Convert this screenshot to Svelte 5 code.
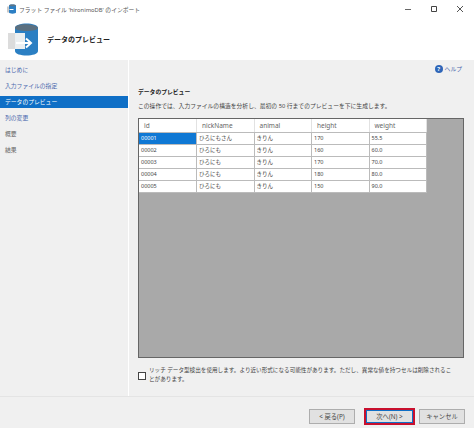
<script>
  const steps = [
    { label: 'はじめに', state: 'link' },
    { label: '入力ファイルの指定', state: 'link' },
    { label: 'データのプレビュー', state: 'active' },
    { label: '列の変更', state: 'link' },
    { label: '概要', state: '' },
    { label: '結果', state: '' }
  ];
  const columns = ['id', 'nickName', 'animal', 'height', 'weight'];
  const rows = [
    ['00001', 'ひろにもさん', 'きりん', '170', '55.5'],
    ['00002', 'ひろにも', 'きりん', '160', '60.0'],
    ['00003', 'ひろにも', 'きりん', '170', '70.0'],
    ['00004', 'ひろにも', 'きりん', '180', '80.0'],
    ['00005', 'ひろにも', 'きりん', '150', '90.0']
  ];
</script>

<div class="window">
  <div class="titlebar">
    <svg class="app-icon" viewBox="0 0 9 10" width="9" height="10">
      <path d="M0 2.500h5v6H0z" fill="#c9c9c9" />
      <path d="M2 1.500c0-1.500 7-1.500 7 0v7c0 1.500-7 1.500-7 0z" fill="#2c7fc4" />
      <path d="M2 1.500c0 1 7 1 7 0s-7-1.500-7 0z" fill="#5d7486" />
      <path d="M2.500 5.500h4" stroke="#fff" />
    </svg>
    <span class="title">フラット ファイル 'hironimoDB' のインポート</span>
    <div class="controls">
      <svg viewBox="0 0 6 6" width="6" height="6"><path d="M0 3.500h6" stroke="#666" /></svg>
      <svg viewBox="0 0 6 6" width="6" height="6"><path d="M.5.500h5v5h-5z" stroke="#444" fill="none" /></svg>
      <svg viewBox="0 0 6 6" width="6" height="6"><path d="M0 0l6 6M6 0l-6 6" stroke="#555" /></svg>
    </div>
  </div>

  <header class="head">
    <svg class="logo" viewBox="0 0 32 33" width="32" height="33">
      <path d="M8 5c0-6 23-6 23 0v23c0 6-23 6-23 0z" fill="#2b7fc3" />
      <path d="M8 5c0 4 23 4 23 0S8-1 8 5z" fill="#5b7080" />
      <path d="M1 10h17v16H1z" fill="#dcdcdc" />
      <path d="M8 10h10v16H8z" fill="#eceff1" />
      <path d="M9 20h14M19 15.500l5 4.500-5 4.500" stroke="#fff" stroke-width="2" fill="none" />
    </svg>
    <h1>データのプレビュー</h1>
  </header>

  <div class="body">
    <nav class="steps">
      {#each steps as step}
        <div class="step {step.state}">{step.label}</div>
      {/each}
    </nav>

    <main class="content">
      <div class="help">
        <span class="help-icon">?</span>
        <span>ヘルプ</span>
      </div>
      <h2>データのプレビュー</h2>
      <p class="intro">この操作では、入力ファイルの構造を分析し、最初の 50 行までのプレビューを下に生成します。</p>

      <div class="grid">
        <table>
          <thead>
            <tr>
              {#each columns as col}
                <th>{col}</th>
              {/each}
            </tr>
          </thead>
          <tbody>
            {#each rows as row, r}
              <tr>
                {#each row as cell, c}
                  <td class:selected={r === 0 && c === 0}>{cell}</td>
                {/each}
              </tr>
            {/each}
          </tbody>
        </table>
      </div>

      <label class="rich">
        <span class="check"></span>
        <span class="rich-text">リッチ データ型検出を使用します。より近い形式になる可能性があります。ただし、異常な値を持つセルは削除されることがあります。</span>
      </label>
    </main>
  </div>

  <footer class="foot">
    <button class="back">&lt; 戻る(P)</button>
    <button class="next">次へ(N) &gt;</button>
    <button class="cancel">キャンセル</button>
  </footer>
</div>

<style>
  :global(body) {
    margin: 0;
    background: #fff;
  }

  .window {
    width: 474px;
    height: 430px;
    display: flex;
    flex-direction: column;
    overflow: hidden;
    background: #fff;
    color: #444;
    font-family: "Noto Sans", "Noto Sans CJK JP", sans-serif;
    font-size: 5.800px;
  }

  .titlebar {
    height: 18px;
    display: flex;
    align-items: center;
    padding-left: 7px;
    gap: 3px;
    flex: none;
  }

  .title {
    color: #555;
  }

  .controls {
    margin-left: auto;
    display: flex;
    gap: 20px;
    padding-right: 11px;
  }

  .head {
    height: 42px;
    display: flex;
    align-items: center;
    padding-left: 7px;
    gap: 8px;
    flex: none;
  }

  h1 {
    margin: 0;
    font-size: 7px;
    font-weight: 700;
    color: #222;
  }

  .body {
    flex: 1;
    display: flex;
    min-height: 0;
    gap: 1px;
  }

  .steps {
    width: 128px;
    flex: none;
    background: #f0f0f0;
    padding-top: 2px;
    box-sizing: border-box;
  }

  .step {
    height: 16px;
    line-height: 16px;
    padding-left: 5px;
    color: #666;
  }

  .step.link {
    color: #4a68ad;
  }

  .step.active {
    height: 12px;
    line-height: 12px;
    margin: 2px 0;
    background: #0f6fc6;
    color: #fff;
  }

  .content {
    flex: 1;
    background: #f0f0f0;
    position: relative;
    padding: 27px 10px 0 9px;
    box-sizing: border-box;
    display: flex;
    flex-direction: column;
  }

  .help {
    position: absolute;
    top: 4px;
    right: 12px;
    display: flex;
    align-items: center;
    gap: 2px;
    color: #4a68ad;
  }

  .help-icon {
    width: 8px;
    height: 8px;
    border-radius: 50%;
    background: #2f66b8;
    color: #fff;
    font-size: 6px;
    line-height: 8px;
    text-align: center;
    font-weight: 700;
  }

  h2 {
    margin: 0;
    font-size: 5.800px;
    line-height: 11px;
    font-weight: 700;
    color: #222;
  }

  .intro {
    margin: 3px 0 7px;
    line-height: 10px;
    white-space: nowrap;
    color: #444;
  }

  .grid {
    height: 240px;
    box-sizing: border-box;
    border: 1px solid #666;
    background: #a9a9a9;
    flex: none;
  }

  table {
    border-collapse: collapse;
    table-layout: fixed;
    width: 288px;
    background: #fff;
    font-size: 5.500px;
  }

  th {
    height: 13px;
    padding: 0 0 0 5px;
    font-size: 6.500px;
    font-weight: 400;
    text-align: left;
    color: #666;
    border-right: 1px solid #e2e2e2;
    border-bottom: 1px solid #bbb;
  }

  td {
    height: 11px;
    padding: 0 0 0 2px;
    line-height: 11px;
    color: #444;
    border-right: 1px solid #bbb;
    border-bottom: 1px solid #bbb;
    overflow: hidden;
    white-space: nowrap;
  }

  td.selected {
    background: #0f78d4;
    color: #fff;
  }

  .rich {
    display: flex;
    gap: 3px;
    margin-top: 8px;
    line-height: 9px;
    color: #444;
  }

  .rich-text {
    width: 305px;
    font-size: 5.600px;
  }

  .check {
    width: 6px;
    height: 6px;
    border: 1px solid #444;
    background: #fff;
    flex: none;
    margin-top: 6px;
  }

  .foot {
    flex: none;
    height: 32px;
    box-sizing: border-box;
    background: #f0f0f0;
    border-top: 1px solid #e4e4e4;
    margin-bottom: 2px;
    display: flex;
    justify-content: flex-end;
    align-items: flex-start;
    padding: 12px 9px 0 0;
  }

  button {
    width: 46px;
    height: 15px;
    padding: 0;
    font: inherit;
    font-size: 6.300px;
    color: #444;
    background: #e1e1e1;
    border: 1px solid #adadad;
  }

  .next {
    width: 47px;
    height: 13px;
    margin: 1px 6px 0 11px;
    border: 1px solid #0f6fc6;
    outline: 2px solid #c8102e;
  }
</style>
